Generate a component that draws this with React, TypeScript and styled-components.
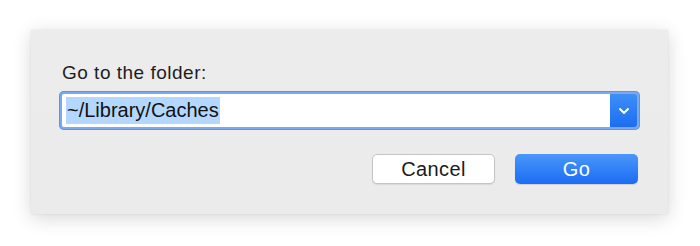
import React from "react";
import styled, { createGlobalStyle } from "styled-components";

const Global = createGlobalStyle`
  html, body { margin: 0; padding: 0; background: #ffffff; }
  body { font-family: "Liberation Sans", Arial, sans-serif; }
`;

const Page = styled.div`
  width: 700px;
  height: 246px;
  box-sizing: border-box;
  padding: 30px 32px 32px 31px;
  background: #ffffff;
`;

const Dialog = styled.div`
  width: 637px;
  height: 184px;
  box-sizing: border-box;
  background: linear-gradient(180deg, #ececec 0%, #ebebeb 100%);
  box-shadow: 0 4px 18px rgba(0, 0, 0, 0.16), 0 0 2px rgba(0, 0, 0, 0.08);
  padding: 31px 28px 0 28px;
  display: flex;
  flex-direction: column;
`;

const Label = styled.div`
  font-size: 19px;
  letter-spacing: 0.5px;
  line-height: 24px;
  color: #1d1d1d;
  padding-left: 3px;
`;

const Combo = styled.div`
  margin-top: 6px;
  height: 39px;
  box-sizing: border-box;
  border-radius: 5px;
  background: #7ba8f0;
  padding: 3px;
  display: flex;
  box-shadow: inset 0 0 0 1px #5f93ea;
`;

const Field = styled.div`
  flex: 1;
  background: #ffffff;
  display: flex;
  align-items: center;
  padding-left: 4px;
  border-radius: 2px 0 0 2px;
`;

const Selected = styled.span`
  background: #b3d7ff;
  font-size: 20px;
  line-height: 27px;
  color: #111;
  padding: 0 1px 0 1px;
`;

const Drop = styled.div`
  width: 27px;
  background: linear-gradient(180deg, #3d8ff7 0%, #1c6df4 100%);
  display: flex;
  align-items: center;
  justify-content: center;
  border-radius: 0 3px 3px 0;
`;

const Buttons = styled.div`
  margin-top: 24px;
  display: flex;
  justify-content: flex-end;
  gap: 20px;
  padding-right: 2px;
`;

const Button = styled.div<{ $primary?: boolean }>`
  width: 123px;
  height: 30px;
  box-sizing: border-box;
  border-radius: 5px;
  display: flex;
  align-items: center;
  justify-content: center;
  font-size: 20px;
  letter-spacing: 0.4px;
  color: ${(p) => (p.$primary ? "#ffffff" : "#1a1a1a")};
  background: ${(p) =>
    p.$primary ? "linear-gradient(180deg, #4a97f8 0%, #1a6cf5 100%)" : "#ffffff"};
  border: ${(p) => (p.$primary ? "none" : "1px solid #c4c4c4")};
  box-shadow: ${(p) =>
    p.$primary ? "0 1px 1px rgba(0,0,0,0.12)" : "0 1px 1px rgba(0,0,0,0.08)"};
`;

export default function App() {
  return (
    <>
      <Global />
      <Page>
        <Dialog>
          <Label>Go to the folder:</Label>
          <Combo>
            <Field>
              <Selected>~/Library/Caches</Selected>
            </Field>
            <Drop>
              <svg width="12" height="8" viewBox="0 0 12 8">
                <path d="M2 2 L6 6 L10 2" fill="none" stroke="#fff" strokeWidth="2" strokeLinecap="round" strokeLinejoin="round" />
              </svg>
            </Drop>
          </Combo>
          <Buttons>
            <Button>Cancel</Button>
            <Button $primary>Go</Button>
          </Buttons>
        </Dialog>
      </Page>
    </>
  );
}
